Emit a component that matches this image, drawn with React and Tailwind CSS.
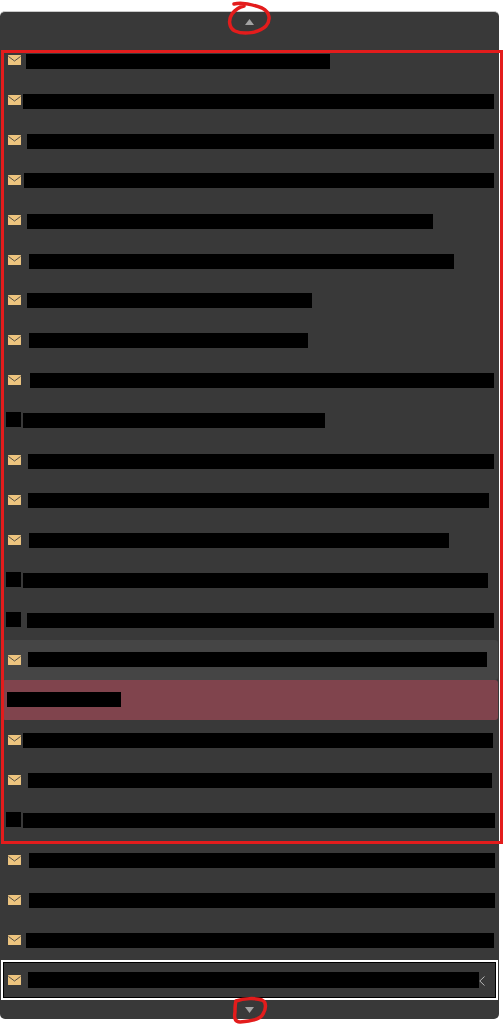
const ROWS = [
  { left: 26, right: 330, top: 14 },
  { left: 23, right: 494, top: 14 },
  { left: 27, right: 494, top: 14 },
  { left: 24, right: 494, top: 13 },
  { left: 27, right: 433, top: 14 },
  { left: 29, right: 454, top: 14 },
  { left: 27, right: 312, top: 13 },
  { left: 29, right: 308, top: 13 },
  { left: 30, right: 494, top: 13 },
  { left: 23, right: 325, top: 13, square: true },
  { left: 28, right: 494, top: 14 },
  { left: 28, right: 489, top: 13 },
  { left: 29, right: 449, top: 13 },
  { left: 23, right: 488, top: 13, square: true },
  { left: 27, right: 494, top: 13, square: true },
  { left: 28, right: 487, top: 12, hover: true },
  { left: 7, right: 121, top: 12, danger: true },
  { left: 23, right: 493, top: 13 },
  { left: 28, right: 492, top: 13 },
  { left: 23, right: 495, top: 13, square: true },
  { left: 29, right: 495, top: 13 },
  { left: 29, right: 495, top: 13 },
  { left: 26, right: 494, top: 13 },
]

function MailIcon({ className }) {
  return (
    <svg className={`shrink-0 ${className}`} width="13" height="10" viewBox="0 0 13 10">
      <rect width="13" height="10" rx="0.5" fill="#edc47f" />
      <path d="M0.5 1.5 L6.5 6 L12.5 1.5" fill="none" stroke="#55514a" strokeWidth="1" />
    </svg>
  )
}

function Row({ row }) {
  let bg = ''
  if (row.hover) bg = 'bg-[#454545] rounded-[3px]'
  if (row.danger) bg = 'bg-[#80444d] rounded-[3px]'
  return (
    <div className={`flex items-start h-10 ml-[2px] mr-px ${bg}`}>
      {row.square && <div className="shrink-0 ml-[4px] mt-[12px] w-[15px] h-[15px] bg-black" />}
      {!row.square && !row.danger && <MailIcon className="ml-[6px] mt-[15px]" />}
      <div
        className="h-[15px] bg-black"
        style={{
          marginLeft: row.danger ? row.left - 2 : row.left - 21,
          width: row.right - row.left,
          marginTop: row.top,
        }}
      />
    </div>
  )
}

export default function App() {
  return (
    <div className="relative min-h-[1027px] bg-white pt-[11px] pb-[8px]">
      <div className="w-[499px] rounded-[5px] bg-[#393939] border-t border-[#c9c9c9]">
        <div className="h-[28px] flex justify-center pt-[7px]">
          <svg width="9" height="6" viewBox="0 0 9 6">
            <path d="M4.5 0 L9 6 L0 6 Z" fill="#a3a3a3" />
          </svg>
        </div>
        <div>
          {ROWS.map((row, i) => (
            <Row key={i} row={row} />
          ))}
        </div>
        <div className="h-10 ml-px mr-px border-2 border-white">
          <div className="flex items-start h-full border border-black">
            <MailIcon className="ml-[4px] mt-[12px]" />
            <div className="ml-[7px] mt-[9px] w-[451px] h-[16px] bg-black" />
            <svg className="mt-[13px] shrink-0" width="6" height="10" viewBox="0 0 6 10">
              <path d="M5.5 0.5 L0.8 5 L5.5 9.5" fill="none" stroke="#b5b5b5" strokeWidth="1" />
            </svg>
          </div>
        </div>
        <div className="h-[19px] flex justify-center pt-[7px]">
          <svg width="9" height="6" viewBox="0 0 9 6">
            <path d="M0 0 L9 0 L4.5 6 Z" fill="#a3a3a3" />
          </svg>
        </div>
      </div>

      {/* red annotations on top of the screenshot */}
      <div className="absolute left-[1px] right-px top-[50px] h-[794px] border-[3px] border-[#e31c1c]" />
      <svg className="absolute left-[224px] top-0 pointer-events-none" width="50" height="38" viewBox="0 0 50 38">
        <path
          d="M10 4 C18 2 30 5 38 8 C46 12 47 20 42 26 C35 33 20 35 11 31 C5 28 4 20 8 14 C11 10 15 7 20 6"
          fill="none"
          stroke="#e31c1c"
          strokeWidth="3.5"
          strokeLinecap="round"
        />
      </svg>
      <svg className="absolute left-[230px] top-[996px] pointer-events-none" width="40" height="30" viewBox="0 0 40 30">
        <path
          d="M6 5 C14 2 26 2 32 4 C37 6 36 13 33 18 C30 24 20 25 10 26 C5 26 4 22 5 16 C5 12 5 8 6 5"
          fill="none"
          stroke="#e31c1c"
          strokeWidth="3.5"
          strokeLinecap="round"
        />
      </svg>
    </div>
  )
}
